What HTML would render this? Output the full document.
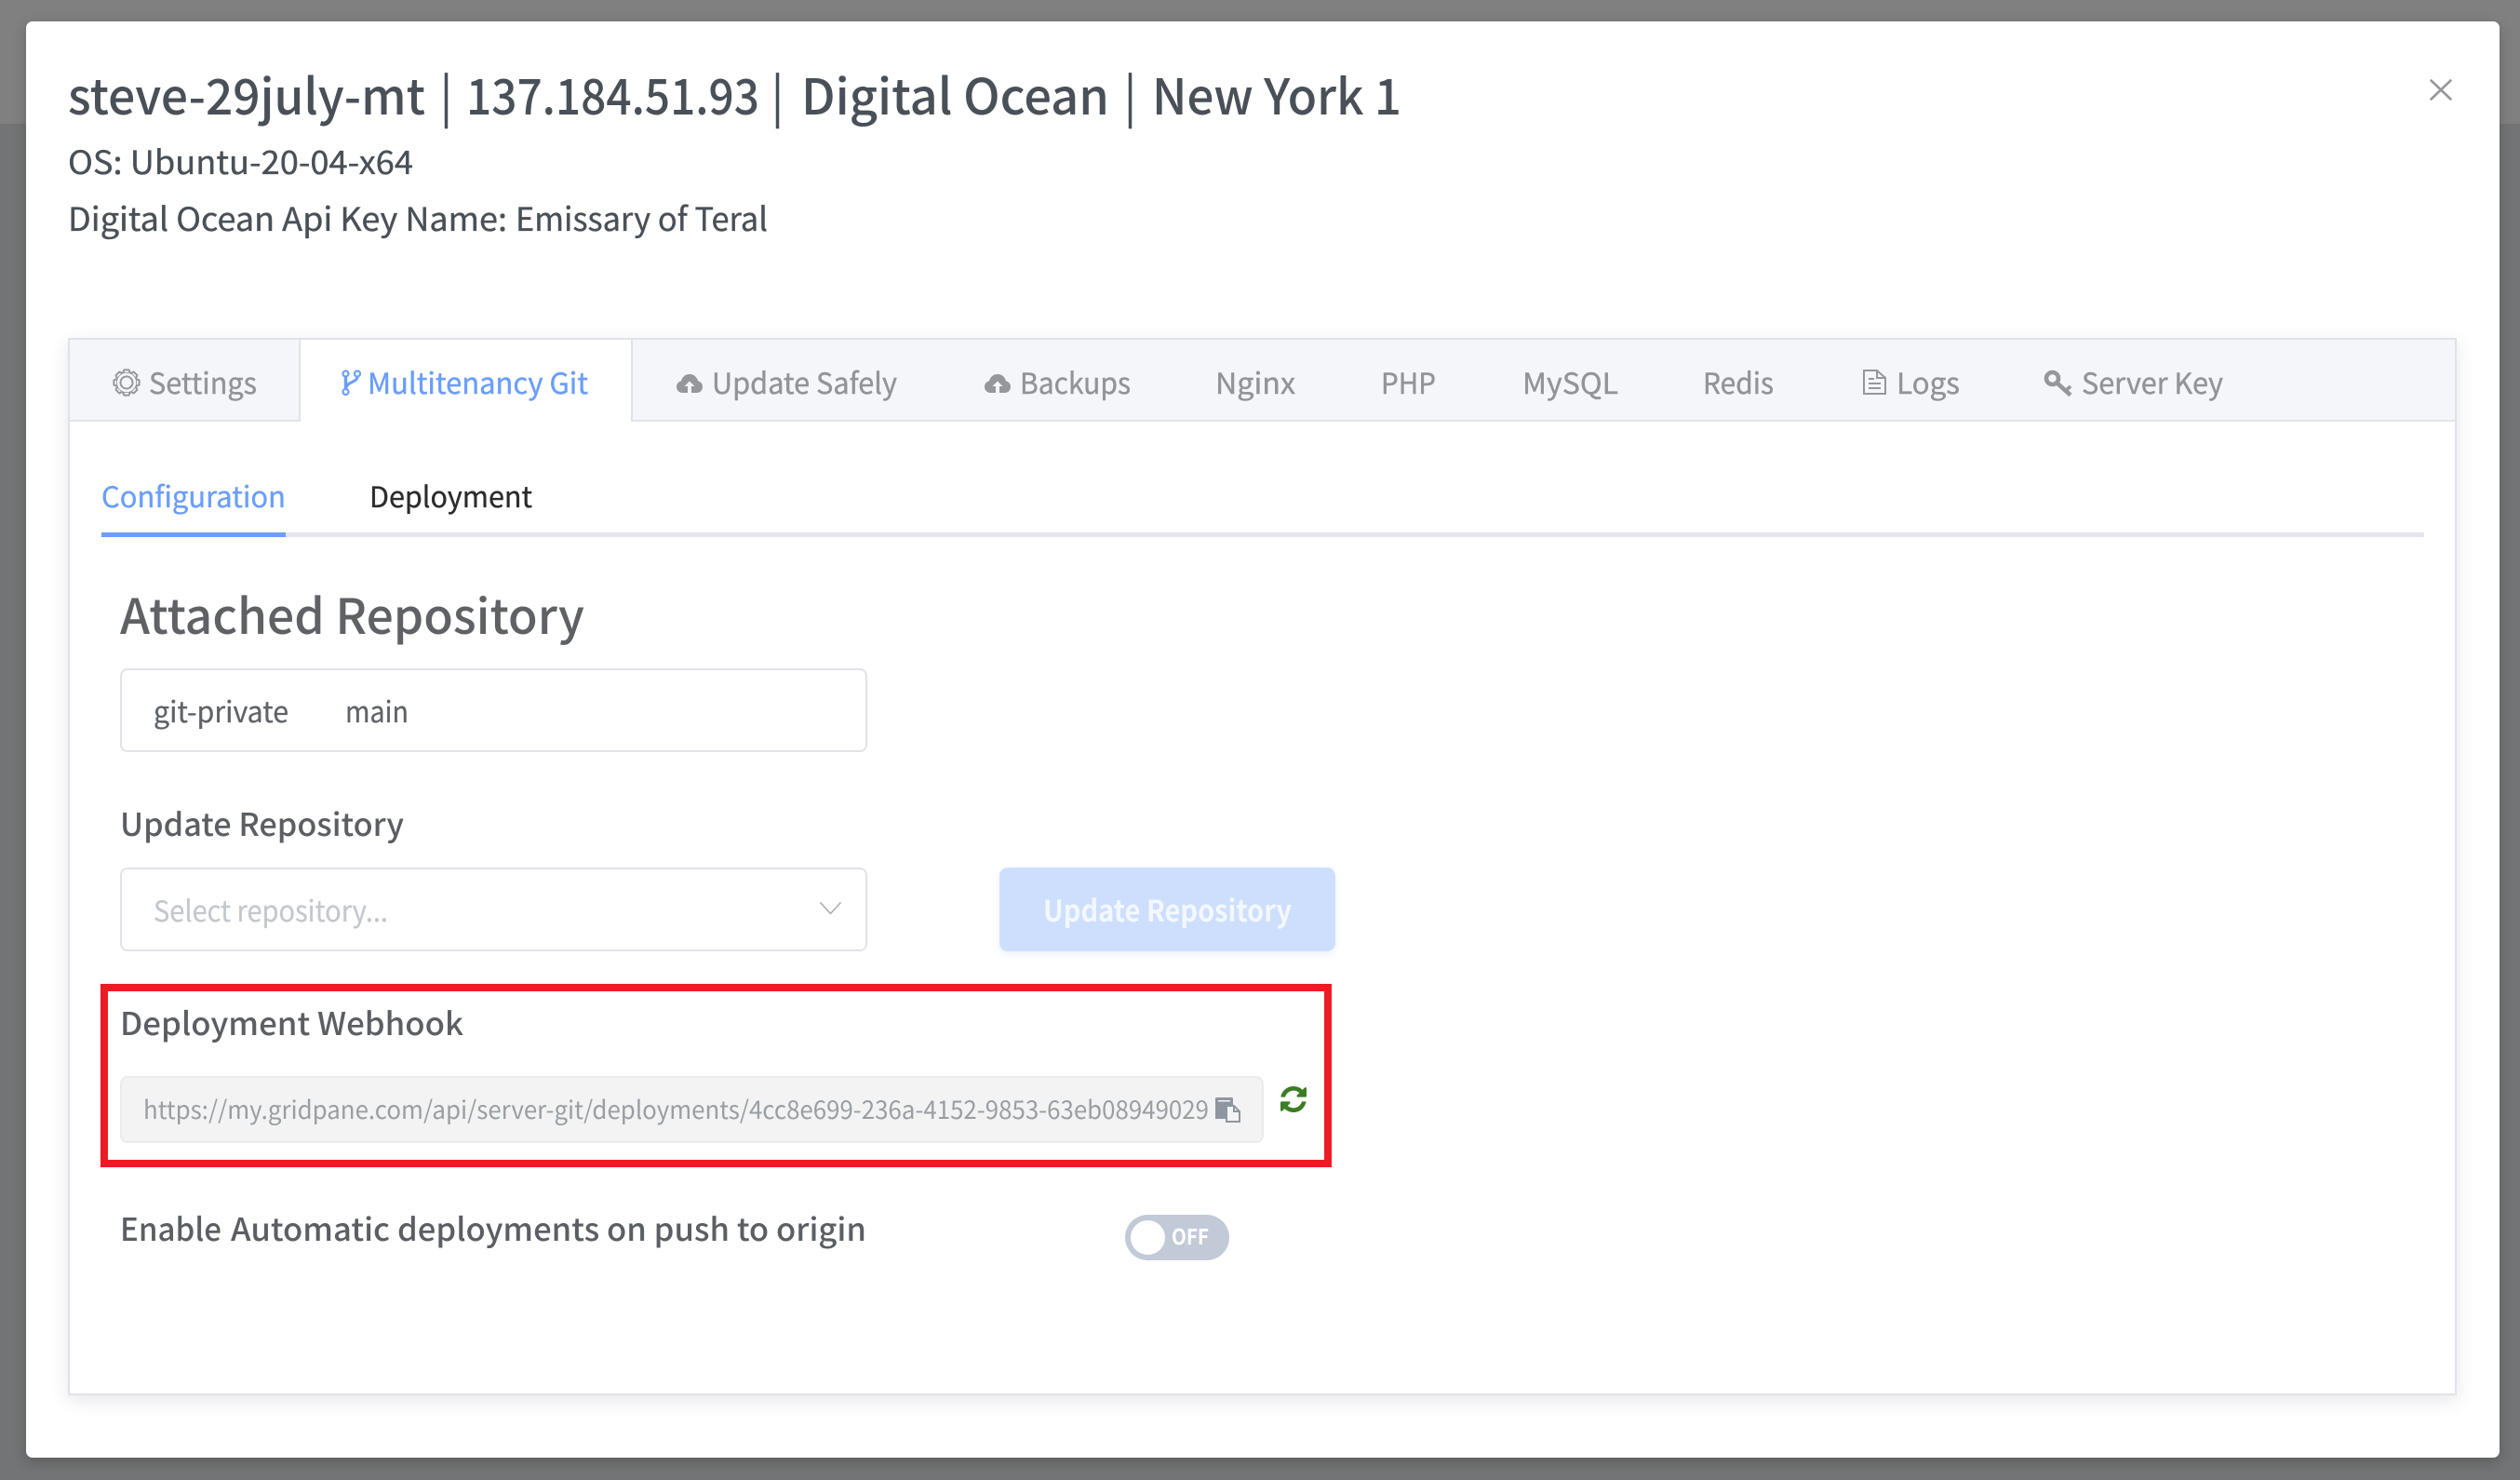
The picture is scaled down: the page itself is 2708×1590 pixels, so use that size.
<!DOCTYPE html>
<html lang="en">
<head>
<meta charset="utf-8">
<title>Server modal</title>
<style>
html,body{margin:0;padding:0;width:2708px;height:1590px;overflow:hidden;background:#737475}
.abs{position:absolute;box-sizing:border-box}
svg{position:absolute;left:0;top:0}
text{font-family:"Noto Sans CJK JP","Liberation Sans",sans-serif;}
</style>
</head>
<body>
<div class="abs" style="left:0;top:0;width:2708px;height:133px;background:#808080"></div>
<div class="abs" style="left:28px;top:23px;width:2658px;height:1543px;background:#fff;border-radius:7px;box-shadow:0 4px 14px rgba(0,0,0,.22)"></div>
<div class="abs" style="left:73px;top:363px;width:2567px;height:1136px;background:#fff;border:2px solid #e1e2e9;box-shadow:0 6px 18px rgba(60,60,90,.12)"></div>
<div class="abs" style="left:75px;top:365px;width:2563px;height:88px;background:#f5f6fa;border-bottom:2px solid #e3e4ea"></div>
<div class="abs" style="left:321px;top:365px;width:359px;height:88px;background:#fff;border-left:2px solid #e1e2e9;border-right:2px solid #e1e2e9"></div>
<div class="abs" style="left:109px;top:572px;width:2496px;height:5px;background:#e4e5ec"></div>
<div class="abs" style="left:109px;top:572px;width:198px;height:5px;background:#6b9efb"></div>
<div class="abs" style="left:129px;top:718px;width:803px;height:90px;border:2px solid #e2e3ea;border-radius:8px;background:#fff"></div>
<div class="abs" style="left:129px;top:932px;width:803px;height:90px;border:2px solid #e2e3ea;border-radius:8px;background:#fff"></div>
<div class="abs" style="left:1074px;top:932px;width:361px;height:90px;background:#cddffd;border-radius:9px;box-shadow:0 3px 8px rgba(90,130,220,.12)"></div>
<div class="abs" style="left:108px;top:1057px;width:1323px;height:197px;border:8px solid #ed1c24"></div>
<div class="abs" style="left:129px;top:1156px;width:1229px;height:72px;background:#f3f3f3;border:2px solid #ebebeb;border-radius:8px"></div>
<div class="abs" style="left:1209px;top:1305px;width:112px;height:49px;background:#c2cad8;border-radius:25px"></div>
<div class="abs" style="left:1215px;top:1311px;width:37px;height:37px;background:#fff;border-radius:50%"></div>

<svg width="2708" height="1590" viewBox="0 0 2708 1590" xmlns="http://www.w3.org/2000/svg">
  <!-- Header -->
  <g font-size="53" font-weight="500" fill="#495057">
    <text x="73" y="123" textLength="384" lengthAdjust="spacingAndGlyphs">steve-29july-mt</text>
    <text x="474" y="123" textLength="11" lengthAdjust="spacingAndGlyphs" stroke="#495057" stroke-width=".5">|</text>
    <text x="501" y="123" textLength="315" lengthAdjust="spacingAndGlyphs">137.184.51.93</text>
    <text x="830" y="123" textLength="11" lengthAdjust="spacingAndGlyphs" stroke="#495057" stroke-width=".5">|</text>
    <text x="861" y="123" textLength="331" lengthAdjust="spacingAndGlyphs">Digital Ocean</text>
    <text x="1209" y="123" textLength="11" lengthAdjust="spacingAndGlyphs" stroke="#495057" stroke-width=".5">|</text>
    <text x="1238" y="123" textLength="268" lengthAdjust="spacingAndGlyphs">New York 1</text>
  </g>
  <g font-size="35" fill="#495057" stroke="#495057" stroke-width=".35">
    <text x="73" y="187" textLength="371" lengthAdjust="spacingAndGlyphs">OS: Ubuntu-20-04-x64</text>
    <text x="73" y="248" textLength="472" lengthAdjust="spacingAndGlyphs">Digital Ocean Api Key Name:</text>
    <text x="554" y="248" textLength="271" lengthAdjust="spacingAndGlyphs">Emissary of Teral</text>
  </g>
  <path d="M2612.5 86.5L2633.5 106.5M2633.5 86.5L2612.5 106.5" stroke="#97989d" stroke-width="2.6" stroke-linecap="round" fill="none"/>

  <!-- Tab labels -->
  <g font-size="31" fill="#939498" stroke="#939498" stroke-width=".4">
    <text x="160" y="423" textLength="116" lengthAdjust="spacingAndGlyphs">Settings</text>
    <text x="395" y="423" fill="#6b9efb" stroke="#6b9efb" textLength="237" lengthAdjust="spacingAndGlyphs">Multitenancy Git</text>
    <text x="765" y="423" textLength="199" lengthAdjust="spacingAndGlyphs">Update Safely</text>
    <text x="1096" y="423" textLength="119" lengthAdjust="spacingAndGlyphs">Backups</text>
    <text x="1306" y="423" textLength="86" lengthAdjust="spacingAndGlyphs">Nginx</text>
    <text x="1484" y="423" textLength="59" lengthAdjust="spacingAndGlyphs">PHP</text>
    <text x="1636" y="423" textLength="103" lengthAdjust="spacingAndGlyphs">MySQL</text>
    <text x="1830" y="423" textLength="76" lengthAdjust="spacingAndGlyphs">Redis</text>
    <text x="2038" y="423" textLength="68" lengthAdjust="spacingAndGlyphs">Logs</text>
    <text x="2237" y="423" textLength="152" lengthAdjust="spacingAndGlyphs">Server Key</text>
  </g>

  <!-- Gear icon -->
  <g transform="translate(136 411)" stroke="#95979c" stroke-width="2" fill="none">
    <circle r="11.2"/>
    <circle r="6.5"/>
    <g fill="#f5f6fa" stroke-linejoin="round">
      <path d="M-3.6 -11L-2.6 -13.6H2.6L3.6 -11"/>
      <path transform="rotate(45)" d="M-3.6 -11L-2.6 -13.6H2.6L3.6 -11"/>
      <path transform="rotate(90)" d="M-3.6 -11L-2.6 -13.6H2.6L3.6 -11"/>
      <path transform="rotate(135)" d="M-3.6 -11L-2.6 -13.6H2.6L3.6 -11"/>
      <path transform="rotate(180)" d="M-3.6 -11L-2.6 -13.6H2.6L3.6 -11"/>
      <path transform="rotate(225)" d="M-3.6 -11L-2.6 -13.6H2.6L3.6 -11"/>
      <path transform="rotate(270)" d="M-3.6 -11L-2.6 -13.6H2.6L3.6 -11"/>
      <path transform="rotate(315)" d="M-3.6 -11L-2.6 -13.6H2.6L3.6 -11"/>
    </g>
  </g>

  <!-- Git branch icon -->
  <g stroke="#6b9efb" fill="none" stroke-width="2.2">
    <circle cx="371.5" cy="401.5" r="3"/>
    <circle cx="384" cy="401.5" r="3"/>
    <circle cx="371.5" cy="421" r="3"/>
    <path d="M371.5 404.5V418" stroke-width="3.4"/>
    <path d="M384 404.5C384 411 372.5 410 372 417" stroke-width="3"/>
  </g>

  <!-- Cloud icons -->
  <g transform="translate(727 402)">
    <path fill="#95979c" d="M6.5 20C2.5 20 0 17 0 13.5C0 10.5 2 8 5 7.3C6 3 9.5 0 14 0C18.5 0 22 3 23 7.3C26 8 28 10.5 28 13.5C28 17 25.5 20 21.5 20Z"/>
    <path fill="#f5f6fa" d="M14 7.5L8.5 13H12V20H16V13H19.5Z"/>
  </g>
  <g transform="translate(1058 402)">
    <path fill="#95979c" d="M6.5 20C2.5 20 0 17 0 13.5C0 10.5 2 8 5 7.3C6 3 9.5 0 14 0C18.5 0 22 3 23 7.3C26 8 28 10.5 28 13.5C28 17 25.5 20 21.5 20Z"/>
    <path fill="#f5f6fa" d="M14 7.5L8.5 13H12V20H16V13H19.5Z"/>
  </g>

  <!-- Logs icon -->
  <g stroke="#95979c" stroke-width="2" fill="none">
    <path d="M2003 398H2017L2026 406V423H2003Z"/>
    <path d="M2017 398V406H2026"/>
    <path d="M2008 407H2014M2008 412H2021M2008 417H2021"/>
  </g>

  <!-- Key icon -->
  <g stroke="#95979c" fill="none">
    <circle cx="2205.5" cy="406.5" r="6.5" stroke-width="4.6"/>
    <path d="M2210.5 411.5L2225 424.5" stroke-width="4.6"/>
    <path d="M2219.5 420L2225 415" stroke-width="3.6"/>
  </g>

  <!-- Sub tabs -->
  <text x="109" y="545" font-size="31" fill="#6b9efb" stroke="#6b9efb" stroke-width=".35" textLength="198" lengthAdjust="spacingAndGlyphs">Configuration</text>
  <text x="397" y="545" font-size="31" fill="#2b2b2b" stroke="#2b2b2b" stroke-width=".35" textLength="175" lengthAdjust="spacingAndGlyphs">Deployment</text>

  <!-- Form -->
  <text x="129" y="681" font-size="52" font-weight="500" fill="#5f6165" textLength="499" lengthAdjust="spacingAndGlyphs">Attached Repository</text>
  <text x="165" y="776" font-size="31" fill="#5f6368" stroke="#5f6368" stroke-width=".25" textLength="145" lengthAdjust="spacingAndGlyphs">git-private</text>
  <text x="371" y="776" font-size="31" fill="#5f6368" stroke="#5f6368" stroke-width=".25" textLength="68" lengthAdjust="spacingAndGlyphs">main</text>
  <text x="129" y="898" font-size="34" font-weight="500" fill="#5b5e63" textLength="305" lengthAdjust="spacingAndGlyphs">Update Repository</text>
  <text x="165" y="990" font-size="31" fill="#c4c7cc" stroke="#c4c7cc" stroke-width=".25" textLength="252" lengthAdjust="spacingAndGlyphs">Select repository...</text>
  <path d="M881.5 969.5L892.5 981.5L903.5 969.5" stroke="#a9acb4" stroke-width="1.6" fill="none"/>
  <text x="1121" y="990" font-size="32" font-weight="700" fill="#f3f7ff" textLength="267" lengthAdjust="spacingAndGlyphs">Update Repository</text>

  <!-- Webhook -->
  <text x="129" y="1112" font-size="34" font-weight="500" fill="#5b5e63" textLength="369" lengthAdjust="spacingAndGlyphs">Deployment Webhook</text>
  <text x="154" y="1202" font-size="27" fill="#999ea3" textLength="1145" lengthAdjust="spacingAndGlyphs">https://my.gridpane.com/api/server-git/deployments/4cc8e699-236a-4152-9853-63eb08949029</text>

  <!-- Copy icon -->
  <path fill="#8e969f" d="M1306 1180.5a1.5 1.5 0 0 1 1.5 -1.5h16a1.5 1.5 0 0 1 1.5 1.5v21.5h-19Z"/>
  <path fill="#f3f3f3" d="M1309 1182h13v1.5h-13Z"/>
  <path fill="#f3f3f3" stroke="#8e969f" stroke-width="2" d="M1318 1188H1326L1332 1194V1205H1318Z"/>
  <path fill="none" stroke="#8e969f" stroke-width="2" d="M1326 1188V1194H1332"/>

  <!-- Refresh icon -->
  <path fill="#3a7d22" transform="translate(1376 1167) scale(.01823) translate(-128 -128)" d="M1639 1056q0 5-1 7-64 268-268 434.5t-478 166.5q-146 0-282.5-55t-243.5-157l-129 129q-19 19-45 19t-45-19-19-45v-448q0-26 19-45t45-19h448q26 0 45 19t19 45-19 45l-137 137q71 66 161 102t187 36q134 0 250-65t186-179q11-17 53-117 8-23 30-23h192q13 0 22.5 9.5t9.5 22.5zm25-800v448q0 26-19 45t-45 19h-448q-26 0-45-19t-19-45 19-45l138-138q-148-137-349-137-134 0-250 65t-186 179q-11 17-53 117-8 23-30 23h-199q-13 0-22.5-9.5t-9.5-22.5v-7q65-268 270-434.5t480-166.5q146 0 284 55.5t245 156.5l130-129q19-19 45-19t45 19 19 45z"/>

  <!-- Toggle row -->
  <g font-size="34" font-weight="500" fill="#5b5e63">
    <text x="129" y="1333" textLength="109" lengthAdjust="spacingAndGlyphs">Enable</text>
    <text x="248" y="1333" textLength="171" lengthAdjust="spacingAndGlyphs">Automatic</text>
    <text x="427" y="1333" textLength="504" lengthAdjust="spacingAndGlyphs">deployments on push to origin</text>
  </g>
  <text x="1259" y="1337" font-size="23" font-weight="700" fill="#fff" textLength="40" lengthAdjust="spacingAndGlyphs">OFF</text>
</svg>
</body>
</html>
